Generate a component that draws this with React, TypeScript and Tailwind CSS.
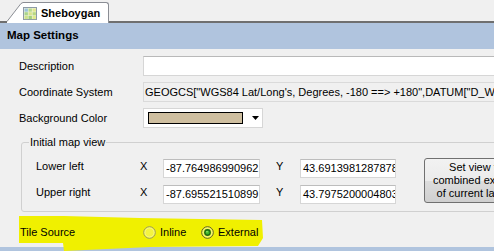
import React from "react";

function MapIcon() {
  const cells = [
    ["#9cc4da", "#b7d98c", "#e1e78e"],
    ["#a9d48b", "#d9e48c", "#b8d77e"],
    ["#cde18b", "#a2d07c", "#e0e98a"],
  ];
  return (
    <svg width="14" height="13" viewBox="0 0 14 13" className="shrink-0">
      <rect x="0.5" y="0.5" width="13" height="12" fill="#eef3e0" stroke="#8d9aa6" />
      {cells.map((row, r) =>
        row.map((c, i) => (
          <rect key={`${r}-${i}`} x={1.5 + i * 4} y={1.5 + r * 3.7} width="3.4" height="3.2" fill={c} />
        ))
      )}
    </svg>
  );
}

function Radio({ checked }: { checked?: boolean }) {
  return (
    <svg width="13" height="13" viewBox="0 0 13 13" className="shrink-0">
      <circle cx="6.5" cy="6.5" r="5.8" fill="rgba(255,255,255,0.25)" stroke={checked ? "#5c5c2a" : "#9a9a5e"} />
      <circle cx="6.5" cy="6.5" r="4.6" fill="none" stroke="rgba(255,255,255,0.35)" />
      {checked && (
        <>
          <circle cx="6.5" cy="6.5" r="3.4" fill="#1f6b12" />
          <circle cx="6.5" cy="6.5" r="2" fill="#3fb42c" />
          <circle cx="6" cy="5.8" r="0.8" fill="#a6f07a" />
        </>
      )}
    </svg>
  );
}

export default function App() {
  return (
    <div className="relative w-[494px] h-[251px] overflow-hidden bg-[#f0f0f0] text-[11px] text-black font-[family-name:Liberation_Sans,Arial,sans-serif]">
      {/* tab strip */}
      <div className="flex h-[23px] items-stretch">
        <div className="w-[7px] shrink-0 border-b-2 border-[#6f6f6f]" />
        <svg width="16" height="23" viewBox="0 0 16 23" className="shrink-0">
          <polygon points="0,23 0,21.5 14,3.5 16,2.5 16,23" fill="#ffffff" />
          <polyline points="0,21.5 14,3.5 16,2.5" fill="none" stroke="#8a8d94" strokeWidth="1" />
        </svg>
        <div className="mt-[2px] flex shrink-0 items-center gap-[4px] rounded-tr-[3px] border-t border-r border-[#8a8d94] bg-white pr-[8px]">
          <MapIcon />
          <span className="font-bold leading-[13px]">Sheboygan</span>
        </div>
        <div className="flex-1 border-b-2 border-[#6f6f6f]" />
      </div>

      {/* section header */}
      <div className="flex h-[26px] items-center bg-[#b0c4de] pl-[7px] text-[11.5px] font-bold">
        Map Settings
      </div>

      <div className="pl-[19px] pt-[7px]">
        <div className="flex h-[20px] items-center">
          <span className="w-[124px] shrink-0">Description</span>
          <div className="h-[20px] w-[420px] shrink-0 border border-[#d6d6d6] border-t-[#b9b9b9] bg-white" />
        </div>

        <div className="mt-[6px] flex h-[20px] items-center">
          <span className="w-[124px] shrink-0">Coordinate System</span>
          <div className="flex h-[20px] w-[420px] shrink-0 items-center overflow-hidden whitespace-nowrap border border-[#dadada] bg-[#f0f0f0] pl-[1px]">
            GEOGCS["WGS84 Lat/Long's, Degrees, -180 ==&gt; +180",DATUM["D_WGS_1984",SPHEROID["WGS_1984"
          </div>
        </div>

        <div className="mt-[6px] flex h-[20px] items-center">
          <span className="w-[124px] shrink-0">Background Color</span>
          <div className="flex h-[20px] w-[120px] shrink-0 items-center border border-[#d6d6d6] bg-white pl-[4px]">
            <div className="h-[12px] w-[95px] border border-black bg-[#cfbfa0]" />
            <svg width="7" height="4" viewBox="0 0 7 4" className="ml-[9px]">
              <polygon points="0,0 7,0 3.5,4" fill="#000" />
            </svg>
          </div>
        </div>

        {/* group box */}
        <div className="relative ml-[2px] mt-[14px] flex h-[70px] w-[600px] items-start rounded-[3px] border border-[#d0d0d0] pl-[14px] pt-[16px]">
          <span className="absolute -top-[7px] left-[7px] bg-[#f0f0f0] px-[1px] leading-[13px]">Initial map view</span>
          <div className="flex flex-col gap-[7px]">
            {[
              ["Lower left", "-87.764986990962", "43.691398128787876"],
              ["Upper right", "-87.695521510899", "43.797520000480331"],
            ].map(([label, x, y]) => (
              <div key={label} className="flex h-[19px] items-start">
                <span className="w-[104px] shrink-0 pt-[1px] leading-[13px]">{label}</span>
                <span className="w-[23px] shrink-0 pt-[1px] leading-[13px]">X</span>
                <div className="flex h-[19px] w-[97px] shrink-0 items-center overflow-hidden whitespace-nowrap border border-[#d6d6d6] border-t-[#bdbdbd] bg-white pl-[2px]">
                  {x}
                </div>
                <span className="ml-[16px] w-[24px] shrink-0 pt-[1px] leading-[13px]">Y</span>
                <div className="flex h-[19px] w-[96px] shrink-0 items-center overflow-hidden whitespace-nowrap border border-[#d6d6d6] border-t-[#bdbdbd] bg-white pl-[2px]">
                  {y}
                </div>
              </div>
            ))}
          </div>
          <button className="-mt-[1px] ml-[28px] flex h-[45px] w-[104px] shrink-0 items-center justify-center rounded-[3px] border border-[#707070] bg-[linear-gradient(#f2f2f2_0%,#ebebeb_50%,#dddddd_51%,#cfcfcf_100%)] text-center leading-[13px] text-black">
            Set view to
            <br />
            combined extents
            <br />
            of current layers
          </button>
        </div>

        {/* tile source */}
        <div className="relative z-[2] ml-[1px] mt-[10px] flex h-[20px] items-center">
          <span className="w-[123px] shrink-0">Tile Source</span>
          <Radio />
          <span className="ml-[4px] w-[41px] shrink-0">Inline</span>
          <Radio checked />
          <span className="ml-[4px]">External</span>
        </div>
      </div>

      <div className="mt-[5px] h-[10px] bg-[#b0c4de]" />

      {/* highlighter marks */}
      <svg width="494" height="251" viewBox="0 0 494 251" className="pointer-events-none absolute left-0 top-0 z-[1]">
        <polygon
          points="19,216 64,216 140,218 262,220 263,238 258,246 150,247 64,251 63,243 19,243"
          fill="#f0f000"
        />
      </svg>
    </div>
  );
}
